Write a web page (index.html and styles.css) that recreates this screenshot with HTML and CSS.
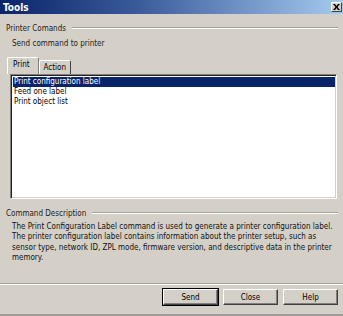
FILE: index.html
```html
<!DOCTYPE html>
<html lang="en">
<head>
  <meta charset="UTF-8" />
  <title>Tools</title>
  <link rel="stylesheet" href="styles.css">
</head>
<body>
  <div class="window">
    <div class="titlebar">
      <span class="title">Tools</span>
      <span class="close-btn">
        <svg width="7" height="6" viewBox="0 0 7 6"><path d="M0 0h2l1.5 2 1.5-2h2l-2.5 3 2.5 3h-2l-1.5-2-1.5 2h-2l2.5-3z" fill="#000"/></svg>
      </span>
    </div>

    <div class="content">
      <div class="group-head">Printer Comands</div>
      <p class="group-text">Send command to printer</p>

      <div class="tabs">
        <span class="tab active">Print</span>
        <span class="tab">Action</span>
      </div>
      <ul class="listbox">
        <li class="selected">Print configuration label</li>
        <li>Feed one label</li>
        <li>Print object list</li>
      </ul>

      <div class="group-head desc-head">Command Description</div>
      <p class="desc">The Print Configuration Label command is used to generate a printer configuration label. The printer configuration label contains information about the printer setup, such as sensor type, network ID, ZPL mode, firmware version, and descriptive data in the printer memory.</p>
    </div>

    <div class="footer">
      <button class="default">Send</button>
      <button>Close</button>
      <button>Help</button>
    </div>
  </div>
</body>
</html>
```
FILE: styles.css
```css
* {
  box-sizing: border-box;
}

body {
  margin: 0;
  background: #d4d0c8;
  font-family: "DejaVu Sans Condensed", "DejaVu Sans", sans-serif;
  font-size: 8px;
  color: #000;
}

.window {
  width: 343px;
  height: 316px;
  display: flex;
  flex-direction: column;
  border-bottom: 2px solid #a09c94;
}

.titlebar {
  height: 14px;
  display: flex;
  justify-content: space-between;
  align-items: center;
  padding: 0 1px 0 3px;
  background: linear-gradient(to right, #0a246a, #3a5a9a 40%, #a6caf0);
}

.title {
  color: #fff;
  font-weight: bold;
  font-size: 10px;
}

.close-btn {
  width: 11px;
  height: 10px;
  display: flex;
  justify-content: center;
  align-items: center;
  background: #d4d0c8;
  border: 1px solid;
  border-color: #fff #404040 #404040 #fff;
}

.content {
  flex: 1;
  padding: 9px 5px 0 6px;
}

.group-head {
  display: flex;
  align-items: center;
  gap: 6px;
  height: 10px;
  color: #222;
}

.group-head::after {
  content: "";
  flex: 1;
  border-top: 1px solid #a8a49c;
  border-bottom: 1px solid #fff;
}

.group-text {
  margin: 6px 0 0 6px;
  line-height: 10px;
  color: #222;
}

.tabs {
  display: flex;
  align-items: flex-end;
  margin: 8px 0 0 1px;
  height: 17px;
}

.tab {
  height: 14px;
  line-height: 13px;
  padding: 0 4px;
  border: 1px solid;
  border-bottom: none;
  border-color: #fff #404040 #404040 #fff;
  border-radius: 2px 2px 0 0;
}

.tab.active {
  height: 17px;
  line-height: 14px;
  padding: 0 8px 0 5px;
  border-right-color: #808080;
}

.listbox {
  list-style: none;
  margin: 0 0 0 4px;
  padding: 1px;
  height: 125px;
  width: 327px;
  background: #fff;
  border: 1px solid;
  border-color: #808080 #fff #fff #808080;
  box-shadow: inset 1px 1px 0 #202020, inset -1px -1px 0 #d4d0c8;
}

.listbox li {
  height: 10px;
  line-height: 10px;
  margin-left: 1px;
  padding-left: 1px;
}

.listbox li:first-child {
  margin-top: 1px;
}

.listbox .selected {
  background: #0a246a;
  color: #fff;
}

.desc-head {
  margin-top: 9px;
}

.desc {
  margin: 4px 0 0 6px;
  line-height: 10.3px;
  color: #111;
}

.footer {
  display: flex;
  justify-content: flex-end;
  gap: 5px;
  padding: 5px 5px 9px;
  border-top: 1px solid #a8a49c;
  box-shadow: inset 0 1px 0 #fff;
}

button {
  width: 55px;
  height: 16px;
  padding: 0;
  font-family: inherit;
  font-size: 8px;
  color: #000;
  background: #d4d0c8;
  border: 1px solid;
  border-color: #fff #404040 #404040 #fff;
  box-shadow: inset -1px -1px 0 #808080;
}

button.default {
  outline: 1px solid #000;
}
```
